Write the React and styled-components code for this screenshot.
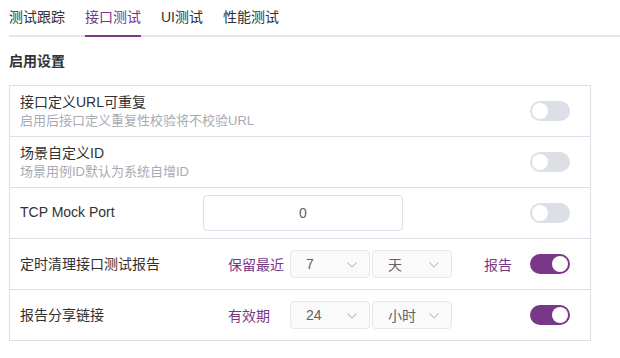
import React from "react";
import styled, { createGlobalStyle } from "styled-components";

const PURPLE = "#783887";

const GlobalStyle = createGlobalStyle`
  * { box-sizing: border-box; }
  body {
    margin: 0;
    background: #ffffff;
    font-family: "Liberation Sans", "Noto Sans CJK SC", sans-serif;
    color: #303133;
  }
`;

const tabs = ["测试跟踪", "接口测试", "UI测试", "性能测试"];

const Chevron = () => (
  <svg width="10" height="6" viewBox="0 0 10 6" fill="none">
    <polyline points="0.5,0.5 5,5 9.5,0.5" stroke="#c0c4cc" strokeWidth="1.1" />
  </svg>
);

const App = () => {
  return (
    <Page>
      <GlobalStyle />
      <TabBar>
        {tabs.map((t) => (
          <Tab key={t} $active={t === "接口测试"}>
            {t}
          </Tab>
        ))}
      </TabBar>
      <SectionTitle>启用设置</SectionTitle>
      <Card>
        <Row>
          <TextBlock>
            <RowTitle>接口定义URL可重复</RowTitle>
            <RowDesc>启用后接口定义重复性校验将不校验URL</RowDesc>
          </TextBlock>
          <Switch />
        </Row>
        <Row>
          <TextBlock>
            <RowTitle>场景自定义ID</RowTitle>
            <RowDesc>场景用例ID默认为系统自增ID</RowDesc>
          </TextBlock>
          <Switch />
        </Row>
        <Row>
          <Label>TCP Mock Port</Label>
          <Controls>
            <NumberInput>0</NumberInput>
          </Controls>
          <Switch />
        </Row>
        <Row>
          <Label>定时清理接口测试报告</Label>
          <Controls>
            <PrefixLabel>保留最近</PrefixLabel>
            <Select>
              <span>7</span>
              <Chevron />
            </Select>
            <Select>
              <span>天</span>
              <Chevron />
            </Select>
          </Controls>
          <SuffixLabel>报告</SuffixLabel>
          <Switch $on />
        </Row>
        <Row>
          <Label>报告分享链接</Label>
          <Controls>
            <PrefixLabel>有效期</PrefixLabel>
            <Select>
              <span>24</span>
              <Chevron />
            </Select>
            <Select>
              <span>小时</span>
              <Chevron />
            </Select>
          </Controls>
          <Switch $on />
        </Row>
      </Card>
    </Page>
  );
};

export default App;

const Page = styled.div`
  padding-left: 9px;
  width: 620px;
`;

const TabBar = styled.div`
  display: flex;
  gap: 20px;
  height: 37px;
  border-bottom: 2px solid #e4e7ed;
`;

const Tab = styled.div`
  height: 37px;
  line-height: 35px;
  font-size: 14px;
  color: ${(p) => (p.$active ? PURPLE : "#303133")};
  border-bottom: 2px solid ${(p) => (p.$active ? PURPLE : "transparent")};
`;

const SectionTitle = styled.div`
  margin-top: 14px;
  line-height: 20px;
  font-size: 14px;
  font-weight: bold;
  color: #303133;
`;

const Card = styled.div`
  margin-top: 14px;
  width: 582px;
  border: 1px solid #dcdfe6;
`;

const Row = styled.div`
  display: flex;
  align-items: center;
  height: 51px;
  padding: 0 20px 0 10px;
  border-bottom: 1px solid #dcdfe6;
  &:last-child {
    height: 50px;
    border-bottom: none;
  }
`;

const TextBlock = styled.div`
  flex: 1;
  display: flex;
  flex-direction: column;
`;

const RowTitle = styled.div`
  font-size: 14px;
  line-height: 20px;
  color: #303133;
`;

const RowDesc = styled.div`
  font-size: 13px;
  line-height: 18px;
  color: #a8abb2;
`;

const Label = styled.div`
  width: 183px;
  flex-shrink: 0;
  font-size: 14px;
  color: #303133;
  margin-top: -2px;
`;

const Controls = styled.div`
  flex: 1;
  display: flex;
  align-items: center;
  gap: 2px;
`;

const NumberInput = styled.div`
  width: 200px;
  height: 36px;
  border: 1px solid #dcdfe6;
  border-radius: 4px;
  display: flex;
  align-items: center;
  justify-content: center;
  font-size: 14px;
  color: #606266;
`;

const PrefixLabel = styled.div`
  width: 85px;
  padding-left: 25px;
  font-size: 14px;
  color: ${PURPLE};
`;

const SuffixLabel = styled.div`
  margin-right: 18px;
  font-size: 14px;
  color: ${PURPLE};
`;

const Select = styled.div`
  width: 80px;
  height: 28px;
  border: 1px solid #e4e7ed;
  border-radius: 4px;
  background: #fafafa;
  display: flex;
  align-items: center;
  justify-content: space-between;
  padding: 0 12px 0 15px;
  font-size: 14px;
  color: #606266;
  svg {
    margin-top: 2px;
  }
`;

const Switch = styled.div`
  position: relative;
  width: 40px;
  height: 20px;
  flex-shrink: 0;
  margin-left: auto;
  border-radius: 10px;
  background: ${(p) => (p.$on ? PURPLE : "#dcdfe6")};
  &::after {
    content: "";
    position: absolute;
    top: 2px;
    left: ${(p) => (p.$on ? "22px" : "2px")};
    width: 16px;
    height: 16px;
    border-radius: 50%;
    background: #ffffff;
  }
`;
